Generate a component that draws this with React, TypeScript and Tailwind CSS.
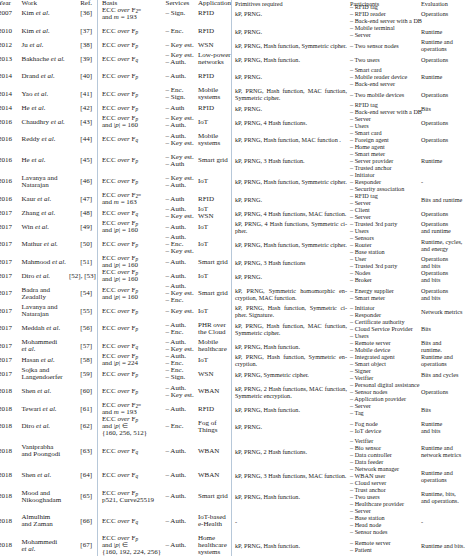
import type { ReactNode } from "react"

type Row = {
  n: number
  year: string
  work: string[]
  ref: string
  basis: string
  services: string[]
  app: string[]
  prims: string[]
  parts: string[]
  evals: string[]
}

const rows: Row[] = [
  { n: 3, year: "2007", work: ["Kim et al."], ref: "[36]", basis: "2m193", services: ["– Sign."], app: ["RFID"], prims: ["kP, PRNG."], parts: ["– RFID tag", "– RFID reader", "– Back-end server with a DB"], evals: ["Operations"] },
  { n: 2, year: "2010", work: ["Kim et al."], ref: "[37]", basis: "p", services: ["– Enc."], app: ["RFID"], prims: ["kP, PRNG."], parts: ["– Mobile terminal", "– Server"], evals: ["Runtime"] },
  { n: 2, year: "2012", work: ["Ju et al."], ref: "[38]", basis: "p", services: ["– Key est."], app: ["WSN"], prims: ["kP, PRNG, Hash function, Symmetric cipher."], parts: ["– Two sensor nodes"], evals: ["Runtime and", "operations"] },
  { n: 2, year: "2013", work: ["Bakhache et al."], ref: "[39]", basis: "q", services: ["– Key est.", "– Auth."], app: ["Low-power", "networks"], prims: ["kP, PRNG, Hash function."], parts: ["– Two users"], evals: ["Operations"] },
  { n: 3, year: "2014", work: ["Drand et al."], ref: "[40]", basis: "p", services: ["– Auth."], app: ["RFID"], prims: ["kP, PRNG."], parts: ["– Smart card", "– Mobile reader device", "– Back-end server"], evals: ["Runtime"] },
  { n: 2, year: "2014", work: ["Yao et al."], ref: "[41]", basis: "p", services: ["– Enc.", "– Sign."], app: ["Mobile", "systems"], prims: ["kP, PRNG, Hash function, MAC function,", "Symmetric cipher."], parts: ["– Two mobile devices"], evals: ["Operations"] },
  { n: 2, year: "2014", work: ["He et al."], ref: "[42]", basis: "p", services: ["– Auth"], app: ["RFID"], prims: ["kP, PRNG."], parts: ["– RFID tag", "– Back-end server with a DB"], evals: ["Bits"] },
  { n: 2, year: "2016", work: ["Chaudhry et al."], ref: "[43]", basis: "p160", services: ["– Key est.", "– Auth."], app: ["IoT"], prims: ["kP, PRNG, 4 Hash functions."], parts: ["– Server", "– Users"], evals: ["Operations"] },
  { n: 3, year: "2016", work: ["Reddy et al."], ref: "[44]", basis: "q", services: ["– Auth.", "– Key est."], app: ["Mobile", "systems"], prims: ["kP, PRNG, Hash function, MAC function ."], parts: ["– Smart card", "– Foreign agent", "– Home agent"], evals: ["Operations"] },
  { n: 3, year: "2016", work: ["He et al."], ref: "[45]", basis: "p", services: ["– Key est.", "– Auth"], app: ["Smart grid"], prims: ["kP, PRNG, 3 Hash function."], parts: ["– Smart meter", "– Server provider", "– Trusted anchor"], evals: ["Runtime"] },
  { n: 3, year: "2016", work: ["Lavanya and", "Natarajan"], ref: "[46]", basis: "p", services: ["– Key est.", "– Auth."], app: ["IoT"], prims: ["kP, PRNG, Hash function, Symmetric cipher."], parts: ["– Initiator", "– Responder", "– Security association"], evals: ["-"] },
  { n: 2, year: "2016", work: ["Kaur et al."], ref: "[47]", basis: "2m163", services: ["– Auth"], app: ["RFID"], prims: ["kP, PRNG."], parts: ["– RFID tag", "– Server"], evals: ["Bits and runtime"] },
  { n: 2, year: "2017", work: ["Zhang et al."], ref: "[48]", basis: "q", services: ["– Auth.", "– Key est."], app: ["IoT", "WSN"], prims: ["kP, PRNG, 4 Hash functions, MAC function."], parts: ["– Client", "– Server"], evals: ["Operations"] },
  { n: 2, year: "2017", work: ["Win et al."], ref: "[49]", basis: "p160", services: ["– Auth."], app: ["IoT"], prims: ["kP, PRNG, 4 Hash functions, Symmetric ci-", "pher."], parts: ["– Trusted 3rd party", "– Users"], evals: ["Operations", "and runtime"] },
  { n: 3, year: "2017", work: ["Mathur et al."], ref: "[50]", basis: "p", services: ["– Auth.", "– Enc.", "– Key est."], app: ["IoT"], prims: ["kP, PRNG, Hash function, Symmetric cipher."], parts: ["– Sensors", "– Router", "– Base station"], evals: ["Runtime, cycles,", "and energy"] },
  { n: 2, year: "2017", work: ["Mahmood et al."], ref: "[51]", basis: "p160", services: ["– Auth."], app: ["Smart grid"], prims: ["kP, PRNG, 3 Hash functions"], parts: ["– User", "– Trusted 3rd party"], evals: ["Operations", "and bits"] },
  { n: 2, year: "2017", work: ["Diro et al."], ref: "[52], [53]", basis: "p160", services: ["– Auth."], app: ["IoT"], prims: ["kP, PRNG."], parts: ["– Nodes", "– Broker"], evals: ["Operations", "and bits"] },
  { n: 3, year: "2017", work: ["Badra and", "Zeadally"], ref: "[54]", basis: "p160", services: ["– Auth.", "– Key est.", "– Enc."], app: ["Smart grid"], prims: ["kP, PRNG, Symmetric homomorphic en-", "cryption, MAC function."], parts: ["– Energy supplier", "– Smart meter"], evals: ["Operations", "and bits"] },
  { n: 2, year: "2017", work: ["Lavanya and", "Natarajan"], ref: "[55]", basis: "p", services: ["– Key est."], app: ["IoT"], prims: ["kP, PRNG, Hash function, Symmetric ci-", "pher. Signature."], parts: ["– Initiator", "– Responder"], evals: ["Network metrics"] },
  { n: 3, year: "2017", work: ["Meddah et al."], ref: "[56]", basis: "p", services: ["– Auth.", "– Enc."], app: ["PHR over", "the Cloud"], prims: ["kP, PRNG, Hash function, MAC function,", "Symmetric cipher."], parts: ["– Certificate authority", "– Cloud Service Provider", "– Users"], evals: ["Bits"] },
  { n: 2, year: "2017", work: ["Mohammedi", "et al."], ref: "[57]", basis: "q", services: ["– Auth.", "– Key est."], app: ["Mobile", "healthcare"], prims: ["kP, PRNG, Hash function."], parts: ["– Remote server", "– Mobile device"], evals: ["Bits and", "runtime."] },
  { n: 2, year: "2017", work: ["Hasan et al."], ref: "[58]", basis: "p224", services: ["– Auth.", "– Enc."], app: ["IoT"], prims: ["kP, PRNG, Hash function, Symmetric en-", "cryption."], parts: ["– Integrated agent", "– Smart object"], evals: ["Runtime and", "operations"] },
  { n: 2, year: "2017", work: ["Sojka and", "Langendoerfer"], ref: "[59]", basis: "p", services: ["– Enc.", "– Sign."], app: ["WSN"], prims: ["kP, PRNG, Symmetric cipher."], parts: ["– Signer", "– Verifier"], evals: ["Bits and cycles"] },
  { n: 3, year: "2018", work: ["Shen et al."], ref: "[60]", basis: "p", services: ["– Auth.", "– Key est."], app: ["WBAN"], prims: ["kP, PRNG, 2 Hash functions, MAC function,", "Symmetric encryption."], parts: ["– Personal digital assistance", "– Sensor nodes", "– Application provider"], evals: ["Operations"] },
  { n: 2, year: "2018", work: ["Tewari et al."], ref: "[61]", basis: "2m193", services: ["– Auth."], app: ["RFID"], prims: ["kP, PRNG, Hash function."], parts: ["– Server", "– Tag"], evals: ["Bits"] },
  { n: 3, year: "2018", work: ["Diro et al."], ref: "[62]", basis: "pset1", services: ["– Enc."], app: ["Fog of", "Things"], prims: ["kP, PRNG."], parts: ["– Fog node", "– IoT device"], evals: ["Runtime", "and bits"] },
  { n: 4, year: "2018", work: ["Vaniprabha", "and Poongodi"], ref: "[63]", basis: "q", services: ["– Auth."], app: ["WBAN"], prims: ["kP, PRNG, 2 Hash functions."], parts: ["– Verifier", "– Bio sensor", "– Data controller", "– Data feeder"], evals: ["Runtime and", "network metrics"] },
  { n: 3, year: "2018", work: ["Shen et al."], ref: "[64]", basis: "q", services: ["– Auth."], app: ["WBAN"], prims: ["kP, PRNG, 3 Hash functions, MAC function."], parts: ["– Network manager", "– WBAN user", "– Cloud server"], evals: ["Runtime and", "operations"] },
  { n: 3, year: "2018", work: ["Mood and", "Nikooghadam"], ref: "[65]", basis: "pcurve", services: ["– Auth."], app: ["Smart grid"], prims: ["kP, PRNG, Hash function."], parts: ["– Trust anchor", "– Two users", "– Healthcare provider"], evals: ["Runtime, bits,", "and operations."] },
  { n: 4, year: "2018", work: ["Almulhim", "and Zaman"], ref: "[66]", basis: "q", services: ["– Auth."], app: ["IoT-based", "e-Health"], prims: ["-"], parts: ["– Server", "– Base station", "– Head node", "– Sensor nodes"], evals: ["-"] },
  { n: 3, year: "2018", work: ["Mohammedi", "et al."], ref: "[67]", basis: "pset2", services: ["– Auth."], app: ["Home", "healthcare", "systems"], prims: ["kP, PRNG, Hash function."], parts: ["– Remote server", "– Patient"], evals: ["Runtime and bits."] },
]

const heights: Record<number, string> = { 2: "h-[14px]", 3: "h-[21px]", 4: "h-[28px]" }

const grid = "grid grid-cols-[23.5px_47.5px_29px_67px_32px_35px_115px_72px_1fr]"
const rule = "border-r border-[#b7c8d9]"
const cell = "flex flex-col justify-center"
const left = "text-[7px]"
const right = "text-[6.2px]"

function basisLines(kind: string): ReactNode[] {
  const p = <>ECC <i>over</i> F<sub><i>p</i></sub></>
  const q = <>ECC <i>over</i> F<sub><i>q</i></sub></>
  const f2m = <>ECC <i>over</i> F<sub>2<sup><i>m</i></sup></sub></>
  switch (kind) {
    case "q":
      return [q]
    case "p160":
      return [p, <>and |<i>p</i>| = 160</>]
    case "p224":
      return [p, <>and |<i>p</i>| = 224</>]
    case "2m193":
      return [f2m, <>and <i>m</i> = 193</>]
    case "2m163":
      return [f2m, <>and <i>m</i> = 163</>]
    case "pset1":
      return [p, <>and |<i>p</i>| ∈</>, "{160, 256, 512}"]
    case "pset2":
      return [p, <>and |<i>p</i>| ∈</>, "{160, 192, 224, 256}"]
    case "pcurve":
      return [p, "p521, Curve25519"]
    default:
      return [p]
  }
}

function workLine(s: string): ReactNode {
  const i = s.indexOf("et al.")
  if (i < 0) return s
  return <>{s.slice(0, i)}<i>et al.</i>{s.slice(i + 6)}</>
}

function Lines({ lines }: { lines: ReactNode[] }) {
  return (
    <>
      {lines.map((l, i) => (
        <div key={i} className="leading-[7px] whitespace-nowrap">{l}</div>
      ))}
    </>
  )
}

// justified paragraph lines, last one ragged
function Prims({ lines }: { lines: string[] }) {
  return (
    <>
      {lines.map((l, i) => (
        <div
          key={i}
          className={i < lines.length - 1 ? "leading-[7px] whitespace-nowrap text-justify [text-align-last:justify]" : "leading-[7px] whitespace-nowrap"}
        >
          {l}
        </div>
      ))}
    </>
  )
}

export default function App() {
  return (
    <div className="w-[474px] h-[556px] overflow-hidden bg-white text-[#1c1c1c] font-['Liberation_Serif','Times_New_Roman',serif]">
      <div className="-ml-[2px] w-[478px]">
        <div className={`${grid} h-[3px]`}>
          <div className={`${cell} ${left}`}><Lines lines={["Year"]} /></div>
          <div className={`${cell} ${left}`}><Lines lines={["Work"]} /></div>
          <div className={`${cell} ${left} ${rule} pr-[5px] text-right`}><Lines lines={["Ref."]} /></div>
          <div className={`${cell} ${left} pl-[4px]`}><Lines lines={["Basis"]} /></div>
          <div className={`${cell} ${left} pl-[0.5px]`}><Lines lines={["Services"]} /></div>
          <div className={`${cell} ${left} ${rule} pl-[1px]`}><Lines lines={["Application"]} /></div>
          <div className={`${cell} ${right} pl-[3px]`}><Lines lines={["Primitives required"]} /></div>
          <div className={`${cell} ${right} pl-[3px]`}><Lines lines={["Participants"]} /></div>
          <div className={`${cell} ${right} pl-[2px]`}><Lines lines={["Evaluation"]} /></div>
        </div>
        {rows.map((r, idx) => (
          <div key={idx} className={`${grid} ${heights[r.n]}`}>
            <div className={`${cell} ${left}`}><Lines lines={[r.year]} /></div>
            <div className={`${cell} ${left}`}><Lines lines={r.work.map(workLine)} /></div>
            <div className={`${cell} ${left} ${rule} pr-[5px] text-right`}><Lines lines={[r.ref]} /></div>
            <div className={`${cell} ${left} pl-[4px]`}><Lines lines={basisLines(r.basis)} /></div>
            <div className={`${cell} ${left} pl-[0.5px]`}><Lines lines={r.services} /></div>
            <div className={`${cell} ${left} ${rule} pl-[1px]`}><Lines lines={r.app} /></div>
            <div className={`${cell} ${right} pl-[3px]`}><Prims lines={r.prims} /></div>
            <div className={`${cell} ${right} pl-[3px]`}><Lines lines={r.parts} /></div>
            <div className={`${cell} ${right} pl-[2px]`}><Lines lines={r.evals} /></div>
          </div>
        ))}
      </div>
    </div>
  )
}
